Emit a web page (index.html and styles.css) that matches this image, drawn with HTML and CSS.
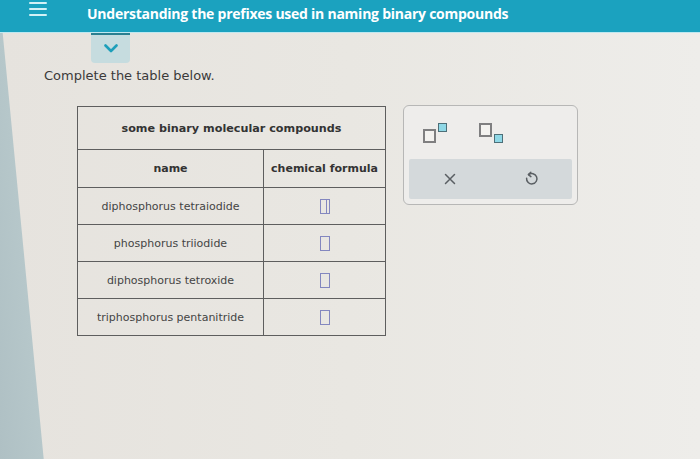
FILE: index.html
```html
<!DOCTYPE html>
<html lang="en">
<head>
<meta charset="utf-8">
<title>Understanding the prefixes used in naming binary compounds</title>
<link rel="stylesheet" href="styles.css">
</head>
<body>
<header class="topbar">
  <div class="menu" aria-label="menu"><span></span><span></span><span></span></div>
  <h1 class="title">Understanding the prefixes used in naming binary compounds</h1>
</header>
<main class="content">
  <div class="tab">
    <svg width="14" height="9" viewBox="0 0 14 9"><path d="M1.5 1.5 L7 7 L12.5 1.5" fill="none" stroke="#1d9fba" stroke-width="2.6" stroke-linecap="round" stroke-linejoin="round"/></svg>
  </div>
  <p class="prompt">Complete the table below.</p>
  <div class="workarea">
    <table class="compounds">
      <tr class="caption-row"><th colspan="2">some binary molecular compounds</th></tr>
      <tr class="head-row"><th class="col-name">name</th><th class="col-formula">chemical formula</th></tr>
      <tr><td>diphosphorus tetraiodide</td><td class="cell-input"><span class="box active"></span></td></tr>
      <tr><td>phosphorus triiodide</td><td class="cell-input"><span class="box"></span></td></tr>
      <tr><td>diphosphorus tetroxide</td><td class="cell-input"><span class="box"></span></td></tr>
      <tr><td>triphosphorus pentanitride</td><td class="cell-input"><span class="box"></span></td></tr>
    </table>
    <div class="palette">
      <div class="palette-top">
        <span class="icon-sup"><span class="big"></span><span class="small"></span></span>
        <span class="icon-sub"><span class="big"></span><span class="small"></span></span>
      </div>
      <div class="palette-bar">
        <svg width="12" height="12" viewBox="0 0 12 12"><path d="M1.5 1.5 L10.5 10.5 M10.5 1.5 L1.5 10.5" stroke="#5a5f63" stroke-width="1.5" stroke-linecap="round"/></svg>
        <svg width="15" height="16" viewBox="0 0 15 16"><path d="M4.6 3.6 A5.2 5.2 0 1 1 2.6 7.2" fill="none" stroke="#5a5f63" stroke-width="1.5" stroke-linecap="round"/><path d="M6.8 1.3 L4.4 3.6 L6.9 5.6" fill="none" stroke="#5a5f63" stroke-width="1.5" stroke-linecap="round" stroke-linejoin="round"/></svg>
      </div>
    </div>
  </div>
</main>
</body>
</html>
```
FILE: styles.css
```css
* { box-sizing: border-box; }
html, body { margin: 0; padding: 0; }
body {
  width: 700px;
  height: 459px;
  overflow: hidden;
  font-family: "DejaVu Sans", Verdana, sans-serif;
  background: #e8e6e1;
}
.topbar {
  height: 33px;
  background: #1ba2bf;
  border-bottom: 1px solid #bfe8f0;
  display: flex;
  align-items: flex-start;
  padding-left: 29px;
}
.menu {
  width: 18px;
  margin-top: 2px;
  display: flex;
  flex-direction: column;
  gap: 4px;
}
.menu span {
  display: block;
  height: 2px;
  background: #d3f1f6;
  border-radius: 1px;
}
.title {
  margin: 5px 0 0 40px;
  font-family: "Open Sans", sans-serif;
  font-weight: 700;
  font-size: 14px;
  line-height: 18px;
  color: #ffffff;
  letter-spacing: -0.25px;
}
.content {
  height: 426px;
  background:
    linear-gradient(84.5deg, #afc0c4 0, #b6c7ca 43px, rgba(0,0,0,0) 44px),
    linear-gradient(90deg, #e6e3de 0, #e9e7e2 50%, #eeedea 100%);
  overflow: hidden;
}
.tab {
  margin-left: 91px;
  width: 39px;
  height: 30px;
  background: #c6dcdf;
  border-top: 2px solid #2a7f90;
  border-radius: 0 0 4px 4px;
  display: flex;
  align-items: center;
  justify-content: center;
  padding-bottom: 2px;
}
.prompt {
  margin: 5px 0 0 44px;
  font-size: 13px;
  line-height: 16px;
  color: #3b3a3a;
}
.workarea {
  display: flex;
  align-items: flex-start;
  margin: 22px 0 0 77px;
  gap: 17px;
}
.compounds {
  width: 309px;
  border-collapse: collapse;
  border: 1px solid #5e5e5e;
  color: #444;
  font-size: 11px;
}
.compounds th, .compounds td {
  border: 1px solid #5e5e5e;
  text-align: center;
  padding: 0;
}
.compounds th { font-weight: bold; color: #333; }
.caption-row th { height: 43px; font-size: 11.2px; }
.head-row th { height: 38px; }
.col-name { width: 186px; }
.compounds td { height: 37px; }
.box {
  display: inline-block;
  width: 10px;
  height: 15px;
  border: 1.5px solid #8387bf;
  vertical-align: middle;
  position: relative;
}
.box.active::after {
  content: "";
  position: absolute;
  left: 2px;
  top: 0;
  bottom: 0;
  width: 3px;
  border-right: 1.5px solid #8387bf;
}
.palette {
  width: 175px;
  height: 100px;
  margin-top: -1px;
  border: 1px solid #b7b7b6;
  border-radius: 6px;
  background: #eeedeb;
  display: flex;
  flex-direction: column;
  padding: 0 5px 5px;
}
.palette-top {
  height: 53px;
  display: flex;
  align-items: center;
  padding-left: 14px;
  gap: 32px;
}
.icon-sup, .icon-sub {
  position: relative;
  display: inline-block;
  width: 24px;
  height: 20px;
}
.icon-sup .big, .icon-sub .big {
  position: absolute;
  width: 13px;
  height: 14px;
  border: 2px solid #7f7f80;
  background: #f3f2ef;
}
.icon-sup .small, .icon-sub .small {
  position: absolute;
  width: 9px;
  height: 9px;
  border: 1.5px solid #4d6f78;
  background: #8fd8e6;
}
.icon-sup .big { left: 0; bottom: 0; }
.icon-sup .small { left: 15px; top: 0; }
.icon-sub .big { left: 0; top: 0; }
.icon-sub .small { left: 15px; bottom: 0; }
.palette-bar {
  flex: 1;
  background: #d4d9db;
  border-radius: 2px;
  display: grid;
  grid-template-columns: 1fr 1fr;
  align-items: center;
  justify-items: center;
}
```
